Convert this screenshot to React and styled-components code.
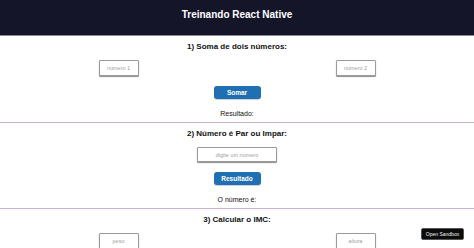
import React from "react";
import styled, { createGlobalStyle } from "styled-components";

const Global = createGlobalStyle`
  html, body { margin: 0; padding: 0; background: #ffffff; }
  body { font-family: "Liberation Sans", Arial, Helvetica, sans-serif; overflow: hidden; }
  * { box-sizing: border-box; }
`;

const Page = styled.div`
  width: 474px;
  height: 248px;
  overflow: hidden;
  display: flex;
  flex-direction: column;
`;

const Header = styled.header`
  height: 36px;
  background: #15152a;
  border-bottom: 1px solid #8a8a96;
  display: flex;
  align-items: center;
  justify-content: center;
  flex-shrink: 0;
`;

const HeaderTitle = styled.h1`
  margin: 0;
  color: #ffffff;
  font-size: 10px;
  font-weight: 700;
  padding-bottom: 7px;
`;

const Section = styled.section`
  display: flex;
  flex-direction: column;
  align-items: center;
  padding: 5px 0 3px;
  border-bottom: 1px solid #cdb0d8;
  flex-shrink: 0;
`;

const SectionTitle = styled.h2`
  margin: 0;
  font-size: 8px;
  line-height: 12px;
  font-weight: 700;
  color: #111;
`;

const InputRow = styled.div`
  width: 100%;
  display: flex;
  justify-content: ${(p) => (p.$single ? "center" : "space-around")};
  margin-top: 7px;
`;

const Field = styled.input`
  width: ${(p) => p.$w}px;
  height: ${(p) => p.$h}px;
  border: 1px solid #9a9a9a;
  border-radius: 1px;
  box-shadow: 0 1px 1px rgba(0, 0, 0, 0.45);
  font-family: "Liberation Sans", Arial, sans-serif;
  font-size: 5.5px;
  text-align: center;
  padding: 0;
  outline: none;
  background: #fff;
  &::placeholder { color: #a0a0a0; }
`;

const Button = styled.button`
  margin-top: 10px;
  width: 47px;
  height: 13px;
  border: none;
  border-radius: 3px;
  background: #1f6fb2;
  color: #fff;
  font-family: "Liberation Sans", Arial, sans-serif;
  font-weight: 700;
  font-size: 6.5px;
  padding: 0;
  box-shadow: 0 1px 1px rgba(0, 0, 0, 0.2);
`;

const ResultText = styled.p`
  margin: 10px 0 0;
  font-size: 7px;
  line-height: 10px;
  color: #111;
`;

const Sandbox = styled.a`
  position: fixed;
  right: 10px;
  bottom: 8px;
  width: 43px;
  height: 12px;
  background: #0b0b0b;
  color: #f2f2f2;
  border: 1px solid #555;
  border-radius: 2px;
  font-size: 5px;
  display: flex;
  align-items: center;
  justify-content: center;
  text-decoration: none;
`;

export default function App() {
  return (
    <Page>
      <Global />
      <Header>
        <HeaderTitle>Treinando React Native</HeaderTitle>
      </Header>
      <Section>
        <SectionTitle>1) Soma de dois números:</SectionTitle>
        <InputRow>
          <Field $w={40} $h={16} placeholder="número 1" />
          <Field $w={40} $h={16} placeholder="número 2" />
        </InputRow>
        <Button>Somar</Button>
        <ResultText>Resultado:</ResultText>
      </Section>
      <Section>
        <SectionTitle>2) Número é Par ou Impar:</SectionTitle>
        <InputRow $single>
          <Field $w={80} $h={15} placeholder="digite um numero" />
        </InputRow>
        <Button>Resultado</Button>
        <ResultText>O número é:</ResultText>
      </Section>
      <Section>
        <SectionTitle>3) Calcular o IMC:</SectionTitle>
        <InputRow>
          <Field $w={40} $h={16} placeholder="peso" />
          <Field $w={40} $h={16} placeholder="altura" />
        </InputRow>
      </Section>
      <Sandbox href="#">Open Sandbox</Sandbox>
    </Page>
  );
}
